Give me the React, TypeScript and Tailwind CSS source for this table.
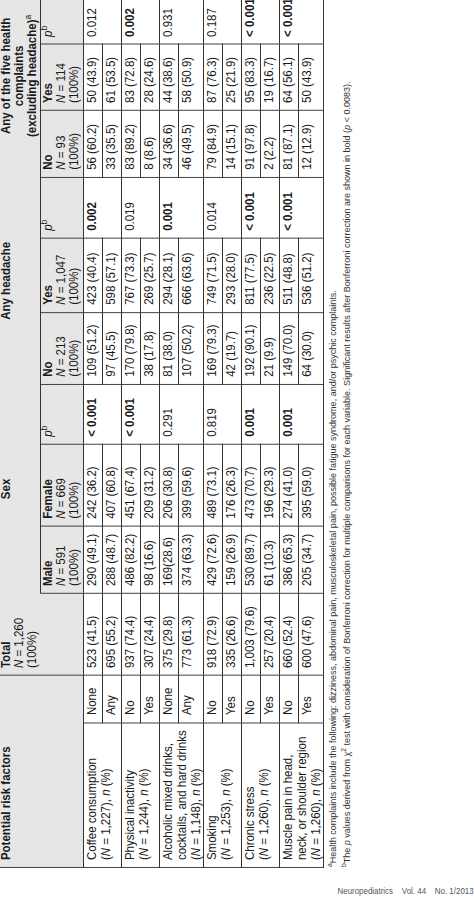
import React from 'react';

type Level = { label: string; vals: string[] };
type PVal = { v: string; bold?: boolean };
type Factor = {
    name: string[];
    n: string;
    levels: [Level, Level];
    p: [PVal, PVal, PVal];
    tall?: boolean;
};

const factors: Factor[] = [
    {
        name: ['Coffee consumption'],
        n: '1,227',
        levels: [
            { label: 'None', vals: ['523 (41.5)', '290 (49.1)', '242 (36.2)', '109 (51.2)', '423 (40.4)', '56 (60.2)', '50 (43.9)'] },
            { label: 'Any', vals: ['695 (55.2)', '288 (48.7)', '407 (60.8)', '97 (45.5)', '598 (57.1)', '33 (35.5)', '61 (53.5)'] },
        ],
        p: [{ v: '< 0.001', bold: true }, { v: '0.002', bold: true }, { v: '0.012' }],
    },
    {
        name: ['Physical inactivity'],
        n: '1,244',
        levels: [
            { label: 'No', vals: ['937 (74.4)', '486 (82.2)', '451 (67.4)', '170 (79.8)', '767 (73.3)', '83 (89.2)', '83 (72.8)'] },
            { label: 'Yes', vals: ['307 (24.4)', '98 (16.6)', '209 (31.2)', '38 (17.8)', '269 (25.7)', '8 (8.6)', '28 (24.6)'] },
        ],
        p: [{ v: '< 0.001', bold: true }, { v: '0.019' }, { v: '0.002', bold: true }],
    },
    {
        name: ['Alcoholic mixed drinks,', 'cocktails, and hard drinks'],
        n: '1,148',
        levels: [
            { label: 'None', vals: ['375 (29.8)', '169(28.6)', '206 (30.8)', '81 (38.0)', '294 (28.1)', '34 (36.6)', '44 (38.6)'] },
            { label: 'Any', vals: ['773 (61.3)', '374 (63.3)', '399 (59.6)', '107 (50.2)', '666 (63.6)', '46 (49.5)', '58 (50.9)'] },
        ],
        p: [{ v: '0.291' }, { v: '0.001', bold: true }, { v: '0.931' }],
        tall: true,
    },
    {
        name: ['Smoking'],
        n: '1,253',
        levels: [
            { label: 'No', vals: ['918 (72.9)', '429 (72.6)', '489 (73.1)', '169 (79.3)', '749 (71.5)', '79 (84.9)', '87 (76.3)'] },
            { label: 'Yes', vals: ['335 (26.6)', '159 (26.9)', '176 (26.3)', '42 (19.7)', '293 (28.0)', '14 (15.1)', '25 (21.9)'] },
        ],
        p: [{ v: '0.819' }, { v: '0.014' }, { v: '0.187' }],
    },
    {
        name: ['Chronic stress'],
        n: '1,260',
        levels: [
            { label: 'No', vals: ['1,003 (79.6)', '530 (89.7)', '473 (70.7)', '192 (90.1)', '811 (77.5)', '91 (97.8)', '95 (83.3)'] },
            { label: 'Yes', vals: ['257 (20.4)', '61 (10.3)', '196 (29.3)', '21 (9.9)', '236 (22.5)', '2 (2.2)', '19 (16.7)'] },
        ],
        p: [{ v: '0.001', bold: true }, { v: '< 0.001', bold: true }, { v: '< 0.001', bold: true }],
    },
    {
        name: ['Muscle pain in head,', 'neck, or shoulder region'],
        n: '1,260',
        levels: [
            { label: 'No', vals: ['660 (52.4)', '386 (65.3)', '274 (41.0)', '149 (70.0)', '511 (48.8)', '81 (87.1)', '64 (56.1)'] },
            { label: 'Yes', vals: ['600 (47.6)', '205 (34.7)', '395 (59.0)', '64 (30.0)', '536 (51.2)', '12 (12.9)', '50 (43.9)'] },
        ],
        p: [{ v: '0.001', bold: true }, { v: '< 0.001', bold: true }, { v: '< 0.001', bold: true }],
        tall: true,
    },
];

const td = 'border border-[#333] px-[7.6px] pt-[1px] pb-0 align-top leading-[14.5px] whitespace-nowrap';
const subTh = 'border border-[#333] bg-[#e6e6e6] px-[7.6px] pt-[1px] align-top text-left font-normal leading-[13px] whitespace-nowrap';

function PCell({ p }: { p: PVal }) {
    return (
        <td rowSpan={2} className={td}>
            <span className={p.bold ? 'font-bold' : ''}>{p.v}</span>
        </td>
    );
}

function SubHead({ label, n }: { label: string; n: string }) {
    return (
        <th className={subTh}>
            <div className="font-bold">{label}</div>
            <div>
                <i>N</i> = {n}
            </div>
            <div>(100%)</div>
        </th>
    );
}

function PHead() {
    return (
        <th className={subTh}>
            <i>p</i>
            <sup>b</sup>
        </th>
    );
}

function FactorRows({ f }: { f: Factor }) {
    const [a, b] = f.levels;
    return (
        <>
            <tr className="h-[19px]">
                <td rowSpan={2} className={`${td} leading-[14px]`}>
                    {f.name.map((line) => (
                        <div key={line}>{line}</div>
                    ))}
                    <div>
                        (<i>N</i> = {f.n}), <i>n</i> (%)
                    </div>
                </td>
                <td className={td}>{a.label}</td>
                <td className={td}>{a.vals[0]}</td>
                <td className={td}>{a.vals[1]}</td>
                <td className={td}>{a.vals[2]}</td>
                <PCell p={f.p[0]} />
                <td className={td}>{a.vals[3]}</td>
                <td className={td}>{a.vals[4]}</td>
                <PCell p={f.p[1]} />
                <td className={td}>{a.vals[5]}</td>
                <td className={td}>{a.vals[6]}</td>
                <PCell p={f.p[2]} />
            </tr>
            <tr className={f.tall ? 'h-[25px]' : 'h-[19px]'}>
                <td className={td}>{b.label}</td>
                {b.vals.map((v, i) => (
                    <td key={i} className={td}>
                        {v}
                    </td>
                ))}
            </tr>
        </>
    );
}

export default function App() {
    return (
        <div className="relative flex h-[901px] w-[474px] flex-col items-end justify-end overflow-hidden bg-white pb-[3px] font-['Liberation_Sans',Arial,sans-serif]">
            {/* page is turned a quarter turn: table reads bottom to top; the type is a little narrow, hence scale-x */}
            <div className="absolute left-0 top-0 h-[474px] w-[1040px] origin-top-left translate-y-[901px] -rotate-90 scale-x-[0.92] pl-[35.9px] text-[12.5px] text-[#1a1a1a]">
                <table className="table-fixed border-collapse">
                    <colgroup>
                        <col className="w-[157.6px]" />
                        <col className="w-[51.1px]" />
                        <col className="w-[89.1px]" />
                        <col className="w-[70.7px]" />
                        <col className="w-[89.1px]" />
                        <col className="w-[65.2px]" />
                        <col className="w-[78.3px]" />
                        <col className="w-[80.4px]" />
                        <col className="w-[66.3px]" />
                        <col className="w-[72.8px]" />
                        <col className="w-[71.7px]" />
                        <col className="w-[76px]" />
                    </colgroup>
                    <thead>
                        <tr className="h-[40px]">
                            <th
                                rowSpan={2}
                                colSpan={2}
                                className="border-b border-l border-r border-[#333] bg-[#e6e6e6] px-[7.6px] align-top text-left font-bold leading-[13px]"
                            >
                                Potential risk factors
                            </th>
                            <th
                                rowSpan={2}
                                className="border-b border-[#333] bg-[#e6e6e6] px-[7.6px] align-top text-left font-normal leading-[13px] whitespace-nowrap"
                            >
                                <div className="font-bold">Total</div>
                                <div>
                                    <i>N</i> = 1,260
                                </div>
                                <div>(100%)</div>
                            </th>
                            <th colSpan={3} className="border-b border-[#333] bg-[#e6e6e6] align-top font-bold leading-[13px]">
                                Sex
                            </th>
                            <th colSpan={3} className="border-b border-[#333] bg-[#e6e6e6] align-top font-bold leading-[13px]">
                                Any headache
                            </th>
                            <th colSpan={3} className="border-b border-[#333] bg-[#e6e6e6] align-top font-bold leading-[13px]">
                                <div>Any of the five health</div>
                                <div>complaints</div>
                                <div>
                                    (excluding headache)<sup className="font-normal">a</sup>
                                </div>
                            </th>
                        </tr>
                        <tr className="h-[43px]">
                            <SubHead label="Male" n="591" />
                            <SubHead label="Female" n="669" />
                            <PHead />
                            <SubHead label="No" n="213" />
                            <SubHead label="Yes" n="1,047" />
                            <PHead />
                            <SubHead label="No" n="93" />
                            <SubHead label="Yes" n="114" />
                            <PHead />
                        </tr>
                    </thead>
                    <tbody>
                        {factors.map((f) => (
                            <FactorRows key={f.name[0]} f={f} />
                        ))}
                    </tbody>
                </table>

                {/* Footnotes */}
                <div className="mt-[2px] pl-[1px] text-[9.8px] leading-[14px] text-[#333] whitespace-nowrap">
                    <div>
                        <sup>a</sup>Health complaints include the following: dizziness, abdominal pain, musculoskeletal pain,
                        possible fatigue syndrome, and/or psychic complaints.
                    </div>
                    <div>
                        <sup>b</sup>The <i>p</i> values derived from χ<sup>2</sup> test with consideration of Bonferroni
                        correction for multiple comparisons for each variable. Significant results after Bonferroni correction
                        are shown in bold (<i>p</i> &lt; 0.0083).
                    </div>
                </div>
            </div>

            {/* Journal line stays upright */}
            <div className="flex origin-right scale-x-[0.88] gap-[10px] text-[9px] text-[#555]">
                <span>Neuropediatrics</span>
                <span>Vol. 44</span>
                <span>No. 1/2013</span>
            </div>
        </div>
    );
}
